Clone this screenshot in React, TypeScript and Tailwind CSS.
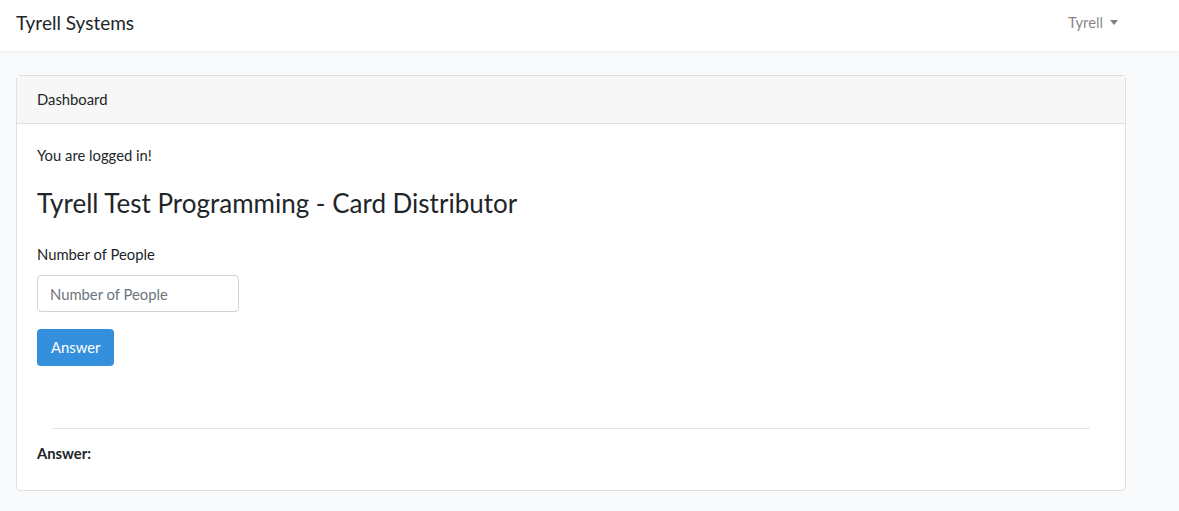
export default function App() {
  return (
    <div className="min-h-[511px] bg-[#f8fafc] text-[#212529] text-[14.8px] leading-[23px]" style={{ fontFamily: "Lato, 'Noto Sans', sans-serif" }}>
      <nav className="bg-white shadow-[0_2px_4px_rgba(0,0,0,0.04)] h-[51px]">
        <div className="w-[1110px] ml-4 h-full flex items-center justify-between pb-[6px]">
          <a className="text-[19px] leading-none text-[#212529]">Tyrell Systems</a>
          <button className="flex items-center gap-[7px] text-[rgba(0,0,0,0.5)] mr-[8px]">
            Tyrell
            <span className="w-0 h-0 border-l-[4px] border-r-[4px] border-t-[5px] border-l-transparent border-r-transparent border-t-[rgba(0,0,0,0.5)]" />
          </button>
        </div>
      </nav>

      <main className="py-6">
        <div className="w-[1110px] ml-4 bg-white border border-[#dfdfdf] rounded">
          <div className="bg-[#f7f7f7] border-b border-[#dfdfdf] px-5 py-3">Dashboard</div>
          <div className="p-5">
            <p className="mb-[21px]">You are logged in!</p>
            <h3 className="text-[26px] leading-[30px] mb-[25px]">Tyrell Test Programming - Card Distributor</h3>
            <form className="mb-[62px]">
              <div className="mb-[17px]">
                <label className="block mb-[9px]">Number of People</label>
                <input
                  placeholder="Number of People"
                  className="w-[202px] h-[37px] px-3 border border-[#ced4da] rounded placeholder:text-[#6c757d] outline-none"
                />
              </div>
              <button type="button" className="bg-[#3490dc] text-white px-[14px] h-[37px] rounded">Answer</button>
            </form>
            <hr className="mx-[15px] border-t border-[#e5e5e5] mb-[13px]" />
            <p className="font-bold mb-[5px]">Answer:</p>
          </div>
        </div>
      </main>
    </div>
  )
}
